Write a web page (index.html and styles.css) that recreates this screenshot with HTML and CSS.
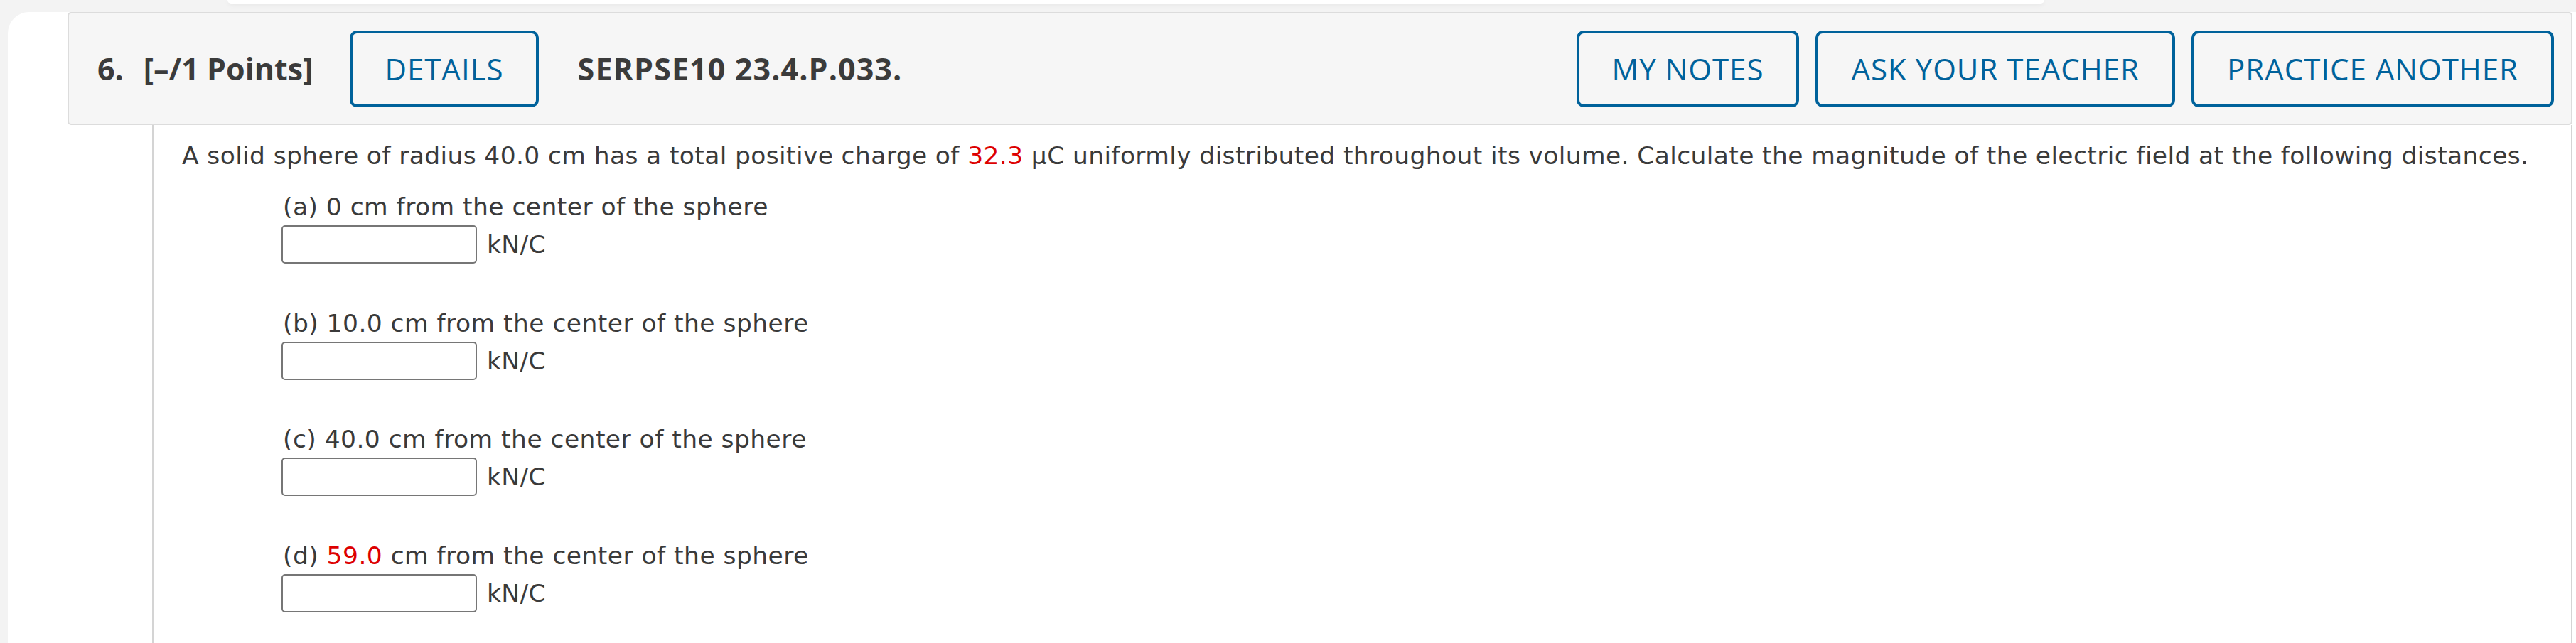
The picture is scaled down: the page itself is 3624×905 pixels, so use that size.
FILE: index.html
```html
<!DOCTYPE html>
<html lang="en">
<head>
<meta charset="utf-8">
<title>Question 6</title>
<link rel="stylesheet" href="styles.css">
</head>
<body>
<div class="top-sheet"></div>
<div class="card">
  <div class="question">
    <div class="q-header">
      <span class="q-num">6.</span>
      <span class="q-points">[–/1 Points]</span>
      <button class="btn btn-details">DETAILS</button>
      <span class="q-code">SERPSE10 23.4.P.033.</span>
      <div class="q-actions">
        <button class="btn">MY NOTES</button>
        <button class="btn">ASK YOUR TEACHER</button>
        <button class="btn">PRACTICE ANOTHER</button>
      </div>
    </div>
    <div class="q-body">
      <p class="q-text">A solid sphere of radius 40.0 cm has a total positive charge of <span class="var">32.3</span> μC uniformly distributed throughout its volume. Calculate the magnitude of the electric field at the following distances.</p>
      <div class="parts">
        <div class="part">
          <div class="part-label">(a) 0 cm from the center of the sphere</div>
          <div class="answer-row"><input class="answer" type="text"><span class="unit">kN/C</span></div>
        </div>
        <div class="part">
          <div class="part-label">(b) 10.0 cm from the center of the sphere</div>
          <div class="answer-row"><input class="answer" type="text"><span class="unit">kN/C</span></div>
        </div>
        <div class="part">
          <div class="part-label">(c) 40.0 cm from the center of the sphere</div>
          <div class="answer-row"><input class="answer" type="text"><span class="unit">kN/C</span></div>
        </div>
        <div class="part">
          <div class="part-label">(d) <span class="var">59.0</span> cm from the center of the sphere</div>
          <div class="answer-row"><input class="answer" type="text"><span class="unit">kN/C</span></div>
        </div>
      </div>
    </div>
  </div>
</div>
</body>
</html>
```

FILE: styles.css
```css
html, body {
  margin: 0;
  padding: 0;
}

body {
  background: #f3f3f3;
  width: 3624px;
  height: 905px;
  overflow: hidden;
  font-family: "DejaVu Sans", Verdana, sans-serif;
  color: #3a3a3a;
}

.top-sheet {
  margin-left: 320px;
  width: 2556px;
  height: 5px;
  background: #ffffff;
  border-radius: 0 0 22px 22px;
  box-shadow: 0 2px 6px rgba(0, 0, 0, 0.06);
}

.card {
  margin-top: 12px;
  margin-left: 11px;
  background: #ffffff;
  border-top-left-radius: 30px;
  padding-left: 84px;
  padding-right: 5px;
  height: 900px;
}

.q-header {
  box-sizing: border-box;
  height: 159px;
  display: flex;
  align-items: center;
  background: #f6f6f6;
  border: 2px solid #dcdcdc;
  border-radius: 5px;
  padding: 0 24px 0 40px;
  font-family: "Open Sans", "Liberation Sans", sans-serif;
  color: #3b3b3b;
}

.q-num,
.q-points,
.q-code {
  font-weight: 700;
  font-size: 43px;
  white-space: nowrap;
}

.q-points {
  margin-left: 28px;
}

.q-code {
  margin-left: 55px;
  letter-spacing: 1.1px;
}

.btn {
  box-sizing: border-box;
  height: 108px;
  padding: 0 46px;
  background: transparent;
  border: 4px solid #00629b;
  border-radius: 10px;
  color: #00629b;
  font-family: "Open Sans", "Liberation Sans", sans-serif;
  font-size: 42px;
  font-weight: 400;
  letter-spacing: 1px;
  white-space: nowrap;
  cursor: pointer;
}

.btn-details {
  margin-left: 52px;
  padding: 0 45px;
}

.q-actions {
  margin-left: auto;
  display: flex;
  gap: 23px;
}

.q-body {
  margin-left: 119px;
  border-left: 2px solid #d4d4d4;
  border-right: 2px solid #d4d4d4;
  padding: 23px 0 0 40px;
  height: 760px;
}

.q-text {
  margin: 0;
  font-size: 34.5px;
  line-height: 40px;
  letter-spacing: 0.37px;
  white-space: nowrap;
}

.var {
  color: #dd0000;
}

.parts {
  margin-top: 32px;
  margin-left: 140px;
  display: flex;
  flex-direction: column;
  gap: 63.7px;
}

.part-label {
  font-size: 34.5px;
  line-height: 40px;
  letter-spacing: 0.45px;
  padding-left: 2px;
  white-space: nowrap;
}

.answer-row {
  margin-top: 6px;
  display: flex;
  align-items: center;
  gap: 14px;
}

.answer {
  box-sizing: border-box;
  width: 275px;
  height: 54px;
  margin: 0;
  border: 2px solid #767676;
  border-radius: 5px;
  background: #ffffff;
  font-family: "DejaVu Sans", Verdana, sans-serif;
  font-size: 34px;
}

.unit {
  font-size: 34.5px;
  line-height: 40px;
  letter-spacing: 0.37px;
}
```
